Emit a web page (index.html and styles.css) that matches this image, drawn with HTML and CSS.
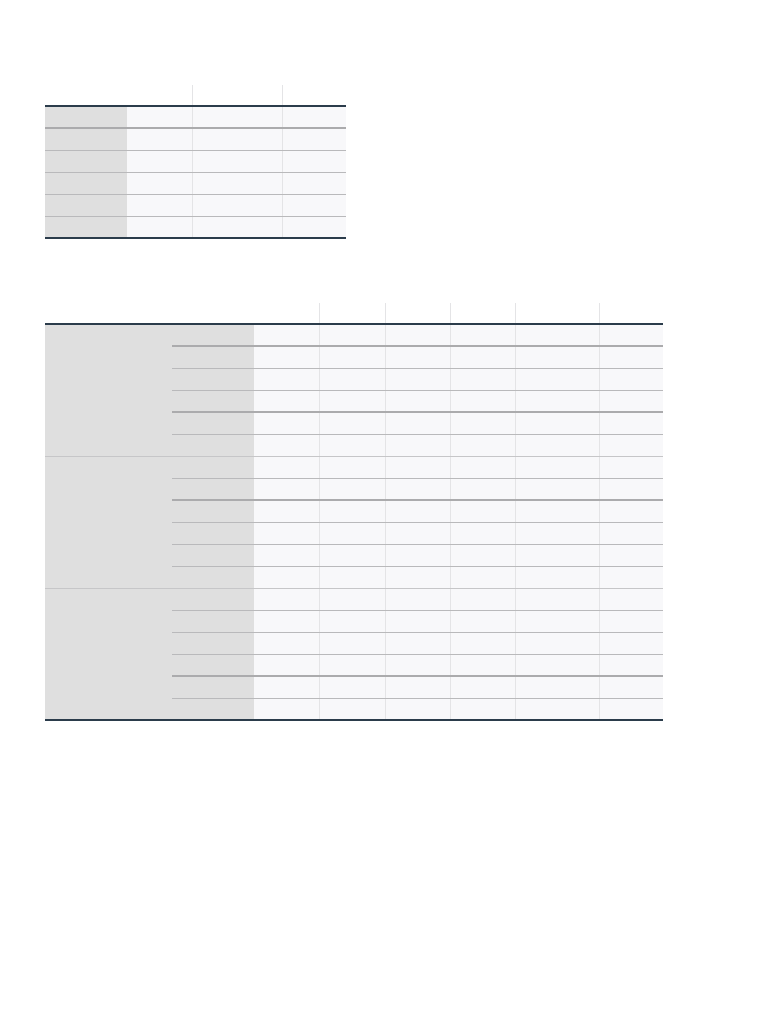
FILE: index.html
```html
<!DOCTYPE html>
<html lang="en">
<head>
<meta charset="utf-8">
<title>Tables</title>
<link rel="stylesheet" href="styles.css">
</head>
<body>
<div class="page">
  <div class="tbl t1">
    <div class="row head">
      <div class="c w82 blank"></div><div class="c w65 blank"></div><div class="c w90 vl blank"></div><div class="c w64 vl blank"></div>
    </div>
    <div class="row thick"><div class="c w82 stub"></div><div class="c w65"></div><div class="c w90 vl"></div><div class="c w64 vl"></div></div>
    <div class="row"><div class="c w82 stub"></div><div class="c w65"></div><div class="c w90 vl"></div><div class="c w64 vl"></div></div>
    <div class="row"><div class="c w82 stub"></div><div class="c w65"></div><div class="c w90 vl"></div><div class="c w64 vl"></div></div>
    <div class="row"><div class="c w82 stub"></div><div class="c w65"></div><div class="c w90 vl"></div><div class="c w64 vl"></div></div>
    <div class="row"><div class="c w82 stub"></div><div class="c w65"></div><div class="c w90 vl"></div><div class="c w64 vl"></div></div>
    <div class="row last"><div class="c w82 stub"></div><div class="c w65"></div><div class="c w90 vl"></div><div class="c w64 vl"></div></div>
  </div>

  <div class="tbl t2">
    <div class="row head">
      <div class="c w127 blank"></div><div class="c w82 blank"></div><div class="c w65 blank"></div><div class="c w66 vl blank"></div><div class="c w65 vl blank"></div><div class="c w65 vl blank"></div><div class="c w84 vl blank"></div><div class="c w64 vl blank"></div>
    </div>

    <div class="group">
      <div class="g-stub"></div>
      <div class="g-rows">
        <div class="row thick"><div class="c w82 stub"></div><div class="c w65"></div><div class="c w66 vl"></div><div class="c w65 vl"></div><div class="c w65 vl"></div><div class="c w84 vl"></div><div class="c w64 vl"></div></div>
        <div class="row"><div class="c w82 stub"></div><div class="c w65"></div><div class="c w66 vl"></div><div class="c w65 vl"></div><div class="c w65 vl"></div><div class="c w84 vl"></div><div class="c w64 vl"></div></div>
        <div class="row"><div class="c w82 stub"></div><div class="c w65"></div><div class="c w66 vl"></div><div class="c w65 vl"></div><div class="c w65 vl"></div><div class="c w84 vl"></div><div class="c w64 vl"></div></div>
        <div class="row thick"><div class="c w82 stub"></div><div class="c w65"></div><div class="c w66 vl"></div><div class="c w65 vl"></div><div class="c w65 vl"></div><div class="c w84 vl"></div><div class="c w64 vl"></div></div>
        <div class="row"><div class="c w82 stub"></div><div class="c w65"></div><div class="c w66 vl"></div><div class="c w65 vl"></div><div class="c w65 vl"></div><div class="c w84 vl"></div><div class="c w64 vl"></div></div>
        <div class="row gend"><div class="c w82 stub"></div><div class="c w65"></div><div class="c w66 vl"></div><div class="c w65 vl"></div><div class="c w65 vl"></div><div class="c w84 vl"></div><div class="c w64 vl"></div></div>
      </div>
    </div>

    <div class="group">
      <div class="g-stub"></div>
      <div class="g-rows">
        <div class="row"><div class="c w82 stub"></div><div class="c w65"></div><div class="c w66 vl"></div><div class="c w65 vl"></div><div class="c w65 vl"></div><div class="c w84 vl"></div><div class="c w64 vl"></div></div>
        <div class="row thick"><div class="c w82 stub"></div><div class="c w65"></div><div class="c w66 vl"></div><div class="c w65 vl"></div><div class="c w65 vl"></div><div class="c w84 vl"></div><div class="c w64 vl"></div></div>
        <div class="row"><div class="c w82 stub"></div><div class="c w65"></div><div class="c w66 vl"></div><div class="c w65 vl"></div><div class="c w65 vl"></div><div class="c w84 vl"></div><div class="c w64 vl"></div></div>
        <div class="row"><div class="c w82 stub"></div><div class="c w65"></div><div class="c w66 vl"></div><div class="c w65 vl"></div><div class="c w65 vl"></div><div class="c w84 vl"></div><div class="c w64 vl"></div></div>
        <div class="row"><div class="c w82 stub"></div><div class="c w65"></div><div class="c w66 vl"></div><div class="c w65 vl"></div><div class="c w65 vl"></div><div class="c w84 vl"></div><div class="c w64 vl"></div></div>
        <div class="row gend"><div class="c w82 stub"></div><div class="c w65"></div><div class="c w66 vl"></div><div class="c w65 vl"></div><div class="c w65 vl"></div><div class="c w84 vl"></div><div class="c w64 vl"></div></div>
      </div>
    </div>

    <div class="group lastgroup">
      <div class="g-stub"></div>
      <div class="g-rows">
        <div class="row"><div class="c w82 stub"></div><div class="c w65"></div><div class="c w66 vl"></div><div class="c w65 vl"></div><div class="c w65 vl"></div><div class="c w84 vl"></div><div class="c w64 vl"></div></div>
        <div class="row"><div class="c w82 stub"></div><div class="c w65"></div><div class="c w66 vl"></div><div class="c w65 vl"></div><div class="c w65 vl"></div><div class="c w84 vl"></div><div class="c w64 vl"></div></div>
        <div class="row"><div class="c w82 stub"></div><div class="c w65"></div><div class="c w66 vl"></div><div class="c w65 vl"></div><div class="c w65 vl"></div><div class="c w84 vl"></div><div class="c w64 vl"></div></div>
        <div class="row thick"><div class="c w82 stub"></div><div class="c w65"></div><div class="c w66 vl"></div><div class="c w65 vl"></div><div class="c w65 vl"></div><div class="c w84 vl"></div><div class="c w64 vl"></div></div>
        <div class="row"><div class="c w82 stub"></div><div class="c w65"></div><div class="c w66 vl"></div><div class="c w65 vl"></div><div class="c w65 vl"></div><div class="c w84 vl"></div><div class="c w64 vl"></div></div>
        <div class="row last"><div class="c w82 stub"></div><div class="c w65"></div><div class="c w66 vl"></div><div class="c w65 vl"></div><div class="c w65 vl"></div><div class="c w84 vl"></div><div class="c w64 vl"></div></div>
      </div>
    </div>
  </div>
</div>
</body>
</html>
```

FILE: styles.css
```css
html, body {
  margin: 0;
  padding: 0;
  background: #ffffff;
  font-family: "Liberation Sans", Arial, sans-serif;
}

.page {
  padding: 85px 0 0 45px;
}

.tbl {
  display: flex;
  flex-direction: column;
}

.t1 {
  width: 301px;
}

.t2 {
  width: 618px;
  margin-top: 64px;
}

.row {
  display: flex;
  height: 22px;
  box-sizing: border-box;
  border-bottom: 1px solid #b9b9bb;
}

.row.head {
  border-bottom: 2px solid #2b3c4b;
}

.row.thick {
  border-bottom: 2px solid #ababad;
}

.row.gend {
  border-bottom: 1px solid #c6c6c8;
}

.row.last {
  border-bottom: 2px solid #2b3c4b;
}

.c {
  box-sizing: border-box;
  height: 100%;
  flex: none;
  background: #f8f8fa;
}

.c.blank {
  background: #ffffff;
}

.c.stub {
  background: #dfdfdf;
}

.c.vl {
  border-left: 1px solid #e4e4e6;
}

.w64 { width: 64px; }
.w65 { width: 65px; }
.w66 { width: 66px; }
.w82 { width: 82px; }
.w84 { width: 84px; }
.w90 { width: 90px; }
.w127 { width: 127px; }

.group {
  display: flex;
}

.g-stub {
  width: 127px;
  flex: none;
  box-sizing: border-box;
  background: #dfdfdf;
  border-bottom: 1px solid #c6c6c8;
}

.lastgroup .g-stub {
  border-bottom: 2px solid #2b3c4b;
}

.g-rows {
  flex: 1;
  display: flex;
  flex-direction: column;
}
```
